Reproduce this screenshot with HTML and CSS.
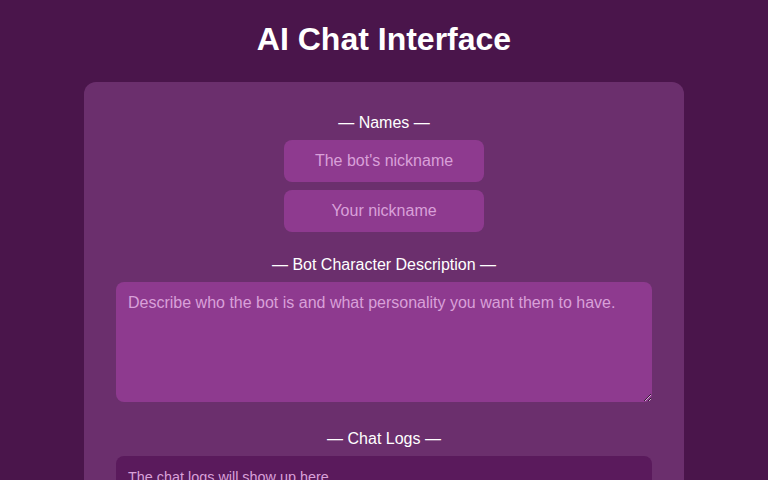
FILE: index.html
```html
<!DOCTYPE html>
<html lang="en">
<head>
    <meta charset="utf-8" />
    <title>AI Chat Interface</title>
    <link rel="stylesheet" href="styles.css">
</head>
<body>
    <h1 class="page-title">AI Chat Interface</h1>
    <div class="panel">
        <div class="section">
            <div class="section-label">— Names —</div>
            <div class="name-fields">
                <input class="field" type="text" placeholder="The bot's nickname" />
                <input class="field" type="text" placeholder="Your nickname" />
            </div>
        </div>
        <div class="section">
            <div class="section-label">— Bot Character Description —</div>
            <textarea class="description" placeholder="Describe who the bot is and what personality you want them to have."></textarea>
        </div>
        <div class="section">
            <div class="section-label">— Chat Logs —</div>
            <div class="chat-logs">The chat logs will show up here.</div>
        </div>
    </div>
</body>
</html>
```

FILE: styles.css
```css
body {
    margin: 0;
    padding: 21px 0 20px;
    background: #4a154b;
    color: #fff;
    font-family: "Liberation Sans", Arial, sans-serif;
}

.page-title {
    margin: 0 0 24px;
    text-align: center;
    font-size: 32px;
    line-height: 37px;
}

.panel {
    width: 600px;
    margin: 0 auto;
    padding: 32px;
    box-sizing: border-box;
    background: #6b2f6d;
    border-radius: 12px;
}

.section {
    display: flex;
    flex-direction: column;
}

.section + .section {
    margin-top: 24px;
}

.section-label {
    text-align: center;
    font-size: 16px;
    line-height: 18px;
    margin-bottom: 8px;
}

.name-fields {
    display: flex;
    flex-direction: column;
    align-items: center;
    gap: 8px;
}

.field,
.description {
    border: 0;
    outline: none;
    background: #8e3a8f;
    color: #fff;
    font-family: inherit;
    font-size: 16px;
    border-radius: 8px;
    box-sizing: border-box;
}

.field {
    width: 200px;
    height: 42px;
    padding: 0 12px;
    text-align: center;
}

.description {
    width: 100%;
    height: 120px;
    margin-bottom: 4px;
    padding: 12px;
    line-height: 18px;
    resize: vertical;
}

.field::placeholder,
.description::placeholder {
    color: #d9a0d9;
}

.chat-logs {
    min-height: 120px;
    padding: 12px;
    background: #5a1a5c;
    border-radius: 8px;
    color: #d9a0d9;
    font-size: 14.4px;
    line-height: 18px;
}
```
